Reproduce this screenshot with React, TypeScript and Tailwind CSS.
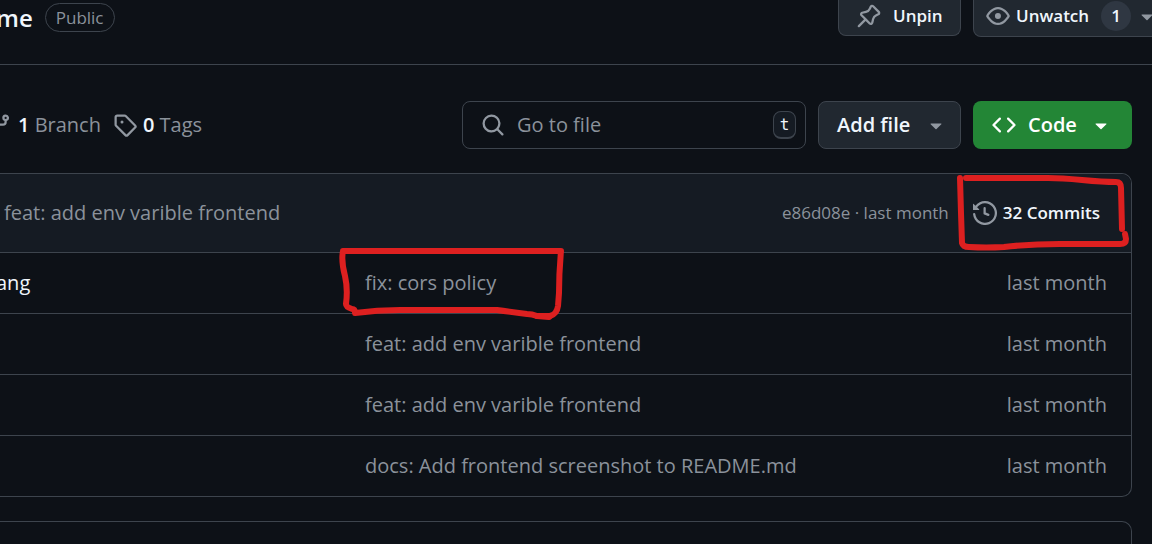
import type { ReactNode } from "react";

const ICONS = {
  pin: "m11.294.984 3.722 3.722a1.75 1.75 0 0 1-.504 2.826l-1.327.613a3.089 3.089 0 0 0-1.707 2.084l-.584 2.454c-.317 1.332-1.972 1.8-2.94.832L5.75 11.311 1.78 15.28a.749.749 0 1 1-1.06-1.06l3.969-3.97-2.204-2.204c-.968-.968-.5-2.623.832-2.94l2.454-.584a3.08 3.08 0 0 0 2.084-1.707l.613-1.327a1.75 1.75 0 0 1 2.826-.504ZM6.283 9.723l2.732 2.731a.25.25 0 0 0 .42-.119l.584-2.454a4.586 4.586 0 0 1 2.537-3.098l1.328-.613a.25.25 0 0 0 .072-.404l-3.722-3.722a.25.25 0 0 0-.404.072l-.613 1.328a4.584 4.584 0 0 1-3.098 2.537l-2.454.584a.25.25 0 0 0-.119.42l2.731 2.732Z",
  eye: "M8 2c1.981 0 3.671.992 4.933 2.078 1.27 1.091 2.187 2.345 2.637 3.023a1.62 1.62 0 0 1 0 1.798c-.45.678-1.367 1.932-2.637 3.023C11.67 13.008 9.981 14 8 14c-1.981 0-3.671-.992-4.933-2.078C1.797 10.83.88 9.576.43 8.898a1.62 1.62 0 0 1 0-1.798c.45-.677 1.367-1.931 2.637-3.022C4.33 2.992 6.019 2 8 2ZM1.679 7.932a.12.12 0 0 0 0 .136c.411.622 1.241 1.75 2.366 2.717C5.176 11.758 6.527 12.5 8 12.5c1.473 0 2.825-.742 3.955-1.715 1.124-.967 1.954-2.096 2.366-2.717a.12.12 0 0 0 0-.136c-.412-.621-1.242-1.75-2.366-2.717C10.824 4.242 9.473 3.5 8 3.5c-1.473 0-2.825.742-3.955 1.715-1.124.967-1.954 2.096-2.366 2.717ZM8 10a2 2 0 1 1-.001-3.999A2 2 0 0 1 8 10Z",
  tag: "M1 7.775V2.75C1 1.784 1.784 1 2.75 1h5.025c.464 0 .91.184 1.238.513l6.25 6.25a1.75 1.75 0 0 1 0 2.474l-5.026 5.026a1.75 1.75 0 0 1-2.474 0l-6.25-6.25A1.752 1.752 0 0 1 1 7.775Zm1.5 0c0 .066.026.13.073.177l6.25 6.25a.25.25 0 0 0 .354 0l5.025-5.025a.25.25 0 0 0 0-.354l-6.25-6.25a.25.25 0 0 0-.177-.073H2.75a.25.25 0 0 0-.25.25ZM6 5a1 1 0 1 1 0 2 1 1 0 0 1 0-2Z",
  branch: "M9.5 3.25a2.25 2.25 0 1 1 3 2.122V6A2.5 2.5 0 0 1 10 8.5H6a1 1 0 0 0-1 1v1.128a2.251 2.251 0 1 1-1.5 0V5.372a2.25 2.25 0 1 1 1.5 0v1.836A2.493 2.493 0 0 1 6 7h4a1 1 0 0 0 1-1v-.628A2.25 2.25 0 0 1 9.5 3.25Zm-6 0a.75.75 0 1 0 1.5 0 .75.75 0 0 0-1.5 0Zm8.25-.75a.75.75 0 1 0 0 1.5.75.75 0 0 0 0-1.5ZM4.25 12a.75.75 0 1 0 0 1.5.75.75 0 0 0 0-1.5Z",
  search: "M10.68 11.74a6 6 0 0 1-7.922-8.982 6 6 0 0 1 8.982 7.922l3.04 3.04a.749.749 0 0 1-.326 1.275.749.749 0 0 1-.734-.215ZM11.5 7a4.499 4.499 0 1 0-8.997 0A4.499 4.499 0 0 0 11.5 7Z",
  code: "m11.28 3.22 4.25 4.25a.75.75 0 0 1 0 1.06l-4.25 4.25a.749.749 0 0 1-1.275-.326.749.749 0 0 1 .215-.734L13.94 8l-3.72-3.72a.749.749 0 0 1 .326-1.275.749.749 0 0 1 .734.215Zm-6.56 0a.751.751 0 0 1 1.042.018.751.751 0 0 1 .018 1.042L2.06 8l3.72 3.72a.749.749 0 0 1-.326 1.275.749.749 0 0 1-.734-.215L.47 8.53a.75.75 0 0 1 0-1.06Z",
  history: "m.427 1.927 1.215 1.215a8.002 8.002 0 1 1-1.6 5.685.75.75 0 1 1 1.493-.154 6.5 6.5 0 1 0 1.18-4.458l1.358 1.358A.25.25 0 0 1 3.896 6H.25A.25.25 0 0 1 0 5.75V2.104a.25.25 0 0 1 .427-.177ZM7.75 4a.75.75 0 0 1 .75.75v2.992l2.028.812a.75.75 0 0 1-.557 1.392l-2.5-1A.751.751 0 0 1 7 8.25v-3.5A.75.75 0 0 1 7.75 4Z",
  caret: "m4.427 7.427 3.396 3.396a.25.25 0 0 0 .354 0l3.396-3.396A.25.25 0 0 0 11.396 7H4.604a.25.25 0 0 0-.177.427Z",
};

const FILES = [
  { name: "ang", message: "fix: cors policy", marked: true },
  { name: "", message: "feat: add env varible frontend", marked: false },
  { name: "", message: "feat: add env varible frontend", marked: false },
  { name: "", message: "docs: Add frontend screenshot to README.md", marked: false },
];

function Icon({ name, className = "text-[#9198a1]" }: { name: keyof typeof ICONS; className?: string }) {
  return (
    <svg viewBox="0 0 16 16" fill="currentColor" aria-hidden="true" className={`size-6 shrink-0 ${className}`}>
      <path d={ICONS[name]} />
    </svg>
  );
}

function Marker({ className, children }: { className: string; children: ReactNode }) {
  return (
    <svg
      fill="none"
      stroke="#dd2020"
      strokeWidth={6}
      strokeLinecap="round"
      strokeLinejoin="round"
      aria-hidden="true"
      className={`pointer-events-none absolute z-10 overflow-visible ${className}`}
    >
      {children}
    </svg>
  );
}

export default function App() {
  return (
    <div className="flex min-h-screen flex-col overflow-hidden bg-[#0d1117] font-['Open_Sans','Noto_Sans',sans-serif] text-xl text-[#8b929b]">
      {/* Repository header */}
      <header className="flex h-[65px] items-start border-b border-[#3d444d]">
        <h1 className="-ml-1 text-2xl leading-9 font-semibold text-[#f0f6fc]">me</h1>
        <span className="mt-[3px] ml-3 flex h-[29px] items-center rounded-full border border-[#3d444d] px-[10px] text-[17px] font-medium">
          Public
        </span>
        <div className="ml-auto flex shrink-0 items-start gap-3 text-[17px] font-semibold text-[#f0f6fc]">
          <button className="flex h-9 w-[123px] items-center gap-3 rounded-b-lg border border-t-0 border-[#3d444d] bg-[#212830] pb-1 pl-[18px]">
            <Icon name="pin" />
            <span>Unpin</span>
          </button>
          <button className="-mr-1 flex h-[37px] w-[183px] items-center rounded-bl-lg border border-t-0 border-[#3d444d] bg-[#212830] pb-1 pl-3">
            <Icon name="eye" />
            <span className="ml-1.5">Unwatch</span>
            <span className="ml-3 flex size-[30px] shrink-0 items-center justify-center rounded-full bg-[#2f3742]">1</span>
            <Icon name="caret" className="ml-1 text-[#9198a1]" />
          </button>
        </div>
      </header>

      <main className="flex grow flex-col pr-5">
        {/* Branches, search and actions */}
        <div className="flex items-center gap-3 py-6 pt-9">
          <nav className="-ml-3 flex items-center gap-3">
            <a href="#branches" className="flex items-center gap-1.5">
              <Icon name="branch" />
              <span><strong className="font-semibold text-[#f0f6fc]">1</strong> Branch</span>
            </a>
            <a href="#tags" className="flex items-center gap-1.5">
              <Icon name="tag" />
              <span><strong className="font-semibold text-[#f0f6fc]">0</strong> Tags</span>
            </a>
          </nav>
          <label className="ml-auto flex h-12 w-[344px] items-center rounded-lg border border-[#3d444d] pr-[9px] pl-[18px]">
            <Icon name="search" />
            <input
              type="text"
              aria-label="Go to file"
              placeholder="Go to file"
              className="ml-3 min-w-0 grow bg-transparent outline-none placeholder:text-[#8b929b]"
            />
            <kbd className="flex h-7 w-[23px] items-center justify-center rounded-lg border border-b-2 border-[#3d444d] bg-[#151b23] font-['DejaVu_Sans_Mono',monospace] text-base text-[#f0f6fc]">
              t
            </kbd>
          </label>
          <button className="flex h-12 w-[143px] items-center justify-between rounded-lg border border-[#3d444d] bg-[#212830] pr-3 pl-[18px] font-semibold text-[#f0f6fc]">
            Add file
            <Icon name="caret" />
          </button>
          <button className="flex h-12 w-[159px] items-center rounded-lg bg-[#238636] pl-[19px] font-semibold text-white">
            <Icon name="code" className="text-white" />
            <span className="ml-3">Code</span>
            <Icon name="caret" className="ml-3 text-white" />
          </button>
        </div>

        {/* File list */}
        <div className="rounded-r-[10px] border border-l-0 border-[#3d444d]">
          <table className="w-full table-fixed">
            <colgroup>
              <col className="w-[365px]" />
              <col />
              <col className="w-[180px]" />
            </colgroup>
            <thead>
              <tr>
                <th colSpan={3} className="h-[78px] rounded-tr-[10px] bg-[#151b23] p-0 font-normal">
                  <div className="flex items-center pr-[31px] pl-1">
                    <a href="#commit">feat: add env varible frontend</a>
                    <span className="ml-auto text-[17px]">e86d08e · last month</span>
                    <a href="#commits" className="relative ml-6 flex items-center gap-1.5 text-[17px] font-semibold text-[#f0f6fc]">
                      <Icon name="history" />
                      32 Commits
                      <Marker className="-top-7 -right-7 h-[76px] w-[168px]">
                        <path d="M0 5 L1 40 L2 70 Q3 74 9 74 Q26 75 44 74 Q70 71 100 71 L160 71 Q166 71 166 66 L165 61" />
                        <path d="M6 5 L88 5 C114 5 130 9 156 9 Q161 9 161 15 L162 56" />
                      </Marker>
                    </a>
                  </div>
                </th>
              </tr>
            </thead>
            <tbody>
              {FILES.map((file, i) => (
                <tr key={i} className="h-[61px] border-t border-[#3d444d]">
                  <td className="p-0 text-[#f0f6fc]">
                    {file.name && <a href="#file" className="-ml-1">{file.name}</a>}
                  </td>
                  <td className="p-0">
                    <span className="relative">
                      {file.message}
                      {file.marked && (
                        <Marker className="-top-5 -left-6 h-[70px] w-[222px]">
                          <path d="M2 2 L220 2 Q218 24 218 44 L217 57 Q216 65 209 67 L196 67 Q191 65 186 65 Q170 63 156 61 L59 61 Q36 61 14 64 Q14 60 11 60 Q5 58 5 55 Q7 40 4 27 Q0 12 2 2" />
                          <path d="M196 67 L208 68" />
                        </Marker>
                      )}
                    </span>
                  </td>
                  <td className="py-0 pr-6 pl-0 text-right">last month</td>
                </tr>
              ))}
            </tbody>
          </table>
        </div>

        <section aria-label="Readme" className="mt-6 grow rounded-tr-[10px] border-t border-r border-[#3d444d]" />
      </main>
    </div>
  );
}
